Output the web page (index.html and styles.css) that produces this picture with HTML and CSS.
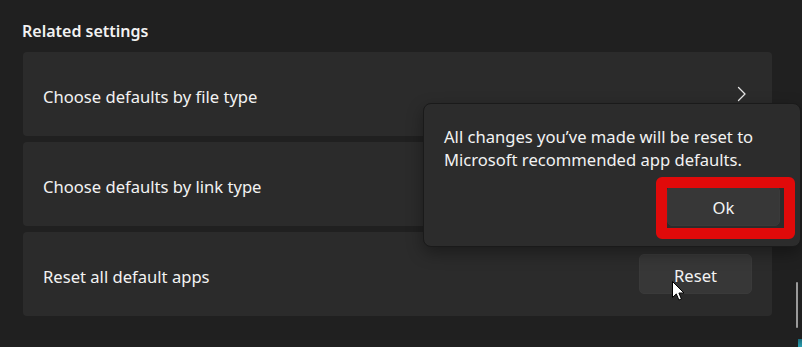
FILE: index.html
```html
<!DOCTYPE html>
<html lang="en">
<head>
    <meta charset="UTF-8">
    <meta name="viewport" content="width=device-width, initial-scale=1.0">
    <title>Default apps - Related settings</title>
    <link rel="stylesheet" href="styles.css">
</head>
<body>

<div class="page">
    <h2 class="section-title">Related settings</h2>

    <!-- Settings cards -->
    <div class="card">
        <span class="card-label">Choose defaults by file type</span>
        <svg class="chevron" width="10" height="16" viewBox="0 0 10 16">
            <path d="M1.5 1.5 L8 8 L1.5 14.5" fill="none" stroke="#e6e6e6" stroke-width="1.3" stroke-linecap="round" stroke-linejoin="round"/>
        </svg>
    </div>

    <div class="card">
        <span class="card-label">Choose defaults by link type</span>
    </div>

    <div class="card">
        <span class="card-label">Reset all default apps</span>
        <button class="btn">Reset</button>
    </div>
</div>

<!-- Confirmation flyout -->
<div class="flyout">
    <p class="flyout-text">All changes you’ve made will be reset to Microsoft recommended app defaults.</p>
    <div class="flyout-actions">
        <button class="btn">Ok</button>
    </div>
</div>

<!-- Red highlight drawn over the Ok button -->
<div class="highlight"></div>

<!-- Mouse pointer -->
<svg class="pointer" width="14" height="21" viewBox="0 0 14 21">
    <path d="M0.5 0.5 L0.5 16.5 L4.3 12.9 L6.9 19 L9.4 18 L6.9 12 L12 12 Z" fill="#ffffff" stroke="#000000" stroke-width="1" stroke-linejoin="miter"/>
</svg>

<div class="scrollbar"></div>
<div class="corner"></div>

</body>
</html>
```

FILE: styles.css
```css
/* Base */
body {
    margin: 0;
    background-color: #202020;
    color: #f2f2f2;
    font-family: "Noto Sans", "Open Sans", sans-serif;
    width: 802px;
    height: 347px;
    overflow: hidden;
    position: relative;
}

.page {
    padding: 20px 30px 0 23px;
}

.section-title {
    font-size: 16px;
    font-weight: 600;
    line-height: 22px;
    margin: 0 0 10px -1px;
}

/* Setting rows */
.card {
    display: flex;
    align-items: center;
    justify-content: space-between;
    height: 84px;
    padding: 0 20px;
    margin-bottom: 6px;
    background-color: #2b2b2b;
    border-radius: 4px;
}

.card-label {
    font-size: 16.6px;
    padding-top: 5px;
}

.chevron {
    margin-right: 5px;
}

.btn {
    width: 113px;
    height: 40px;
    background-color: #373737;
    color: #f2f2f2;
    border: 1px solid #3a3a3a;
    border-radius: 5px;
    font-family: inherit;
    font-size: 16.6px;
    padding: 3px 0 0 0;
}

/* Flyout */
.flyout {
    position: absolute;
    left: 423px;
    top: 103px;
    width: 378px;
    height: 144px;
    box-sizing: border-box;
    padding: 21px 20px 20px 20px;
    background-color: #2c2c2c;
    border: 1px solid #1a1a1a;
    border-radius: 8px;
    box-shadow: 0 6px 16px rgba(0, 0, 0, 0.35);
    display: flex;
    flex-direction: column;
    justify-content: space-between;
}

.flyout-text {
    margin: 0;
    font-size: 16.6px;
    line-height: 23px;
}

.flyout-actions {
    display: flex;
    justify-content: flex-end;
}

.highlight {
    position: absolute;
    left: 656px;
    top: 177px;
    width: 139px;
    height: 62px;
    box-sizing: border-box;
    border: 11px solid #e00a0a;
    border-radius: 6px;
}

.pointer {
    position: absolute;
    left: 672px;
    top: 281px;
}

.scrollbar {
    position: absolute;
    left: 796px;
    top: 282px;
    width: 2px;
    height: 46px;
    background-color: #9a9a9a;
    border-radius: 1px;
}

.corner {
    position: absolute;
    right: 0;
    bottom: 0;
    width: 4px;
    height: 8px;
    background: linear-gradient(#1a6a7a, #2aa0b0);
}
```
